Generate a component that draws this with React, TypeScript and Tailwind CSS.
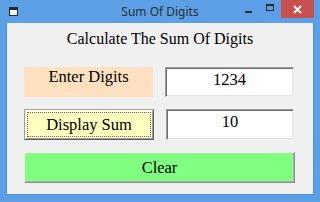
import React from "react";

const serifCls = "font-['Liberation_Serif','DejaVu_Serif',serif]";

export default function App() {
  return (
    <div className="w-[320px] h-[202px] bg-[#5ba0e7] flex flex-col overflow-hidden">
      {/* Title bar */}
      <div className="h-[23px] flex items-start shrink-0">
        <div className="w-[80px] flex items-start pl-[9px] pt-[7px]">
          <svg width="9" height="9" viewBox="0 0 9 9">
            <rect x="0.5" y="0.5" width="8" height="8" fill="#ffffff" stroke="#2a2a2a" />
            <rect x="0.5" y="0.5" width="8" height="2.5" fill="#2a2a2a" />
          </svg>
        </div>
        <div className="flex-1 text-center text-[12px] leading-[23px] text-[#2e2e2e] font-['Noto_Sans','Open_Sans',sans-serif]">
          Sum Of Digits
        </div>
        <div className="w-[80px] flex items-start">
          <div className="pl-[5px] pt-[11px]">
            <div className="w-[7px] h-[2px] bg-[#2a2a2a]" />
          </div>
          <div className="ml-[14px] pt-[4px]">
            <div className="w-[8px] h-[7px] border border-[#2a2a2a] border-t-2" />
          </div>
          <div className="ml-[7px] w-[33px] h-[18px] bg-[#c75050] flex items-center justify-center">
            <svg width="9" height="9" viewBox="0 0 9 9">
              <path d="M1 1 L8 8 M8 1 L1 8" stroke="#ffffff" strokeWidth="1.8" />
            </svg>
          </div>
        </div>
      </div>

      {/* Client area */}
      <div className="mx-[6px] border border-[#4a8fd6] border-t-0 flex-1 mb-[7px]">
        <div className={`h-full bg-[#f0f0f0] flex flex-col pl-[17px] ${serifCls}`}>
          <div className={`h-[44px] pt-[6px] pr-[17px] text-center text-[16px] leading-[20px] text-black ${serifCls}`}>
            Calculate The Sum Of Digits
          </div>
          <div className="flex gap-[12px] h-[30px]">
            <div className={`w-[129px] bg-[#ffe0c0] text-center text-[16.5px] leading-[20px] text-black ${serifCls}`}>
              Enter Digits
            </div>
            <div className={`w-[129px] bg-white border border-t-[#a0a0a0] border-l-[#a0a0a0] border-b-[#f0f0f0] border-r-[#f0f0f0] shadow-[inset_1px_1px_0_#6d6d6d,inset_-1px_-1px_0_#e3e3e3] text-center text-[16.5px] leading-[20px] pt-[2px] text-black ${serifCls}`}>
              1234
            </div>
          </div>
          <div className="flex gap-[12px] h-[31px] mt-[12px]">
            <div className="w-[130px] bg-[#ffffc0] border border-t-[#a0a0a0] border-l-[#a0a0a0] border-b-[#5a5a5a] border-r-[#5a5a5a] shadow-[inset_1px_1px_0_#ffffff,inset_-1px_-1px_0_#a0a0a0] p-[2px]">
              <div className={`h-full border border-dotted border-[#666] flex items-center justify-center text-[16.5px] leading-[20px] text-black ${serifCls}`}>
                Display Sum
              </div>
            </div>
            <div className={`w-[128px] bg-white border border-t-[#a0a0a0] border-l-[#a0a0a0] border-b-[#f0f0f0] border-r-[#f0f0f0] shadow-[inset_1px_1px_0_#6d6d6d,inset_-1px_-1px_0_#e3e3e3] text-center text-[16.5px] leading-[20px] pt-[2px] text-black ${serifCls}`}>
              10
            </div>
          </div>
          <div className={`mt-[12px] w-[271px] h-[31px] bg-[#80ff80] border border-t-[#ffffff] border-l-[#ffffff] border-b-[#8a8a8a] border-r-[#8a8a8a] shadow-[inset_-1px_-1px_0_#b0b0b0] flex items-center justify-center text-[16.5px] leading-[20px] text-black ${serifCls}`}>
            Clear
          </div>
        </div>
      </div>
    </div>
  );
}
